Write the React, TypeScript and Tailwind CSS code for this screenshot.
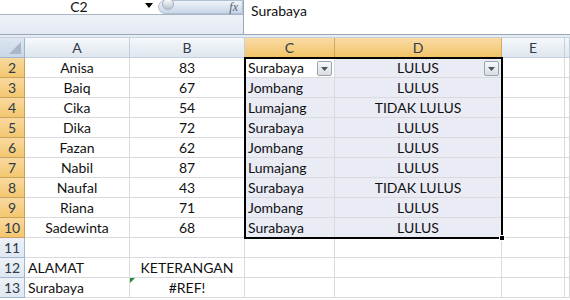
import React from "react";

const rows: { n: number; a: string; b: string; c: string; d: string }[] = [
  { n: 2, a: "Anisa", b: "83", c: "Surabaya", d: "LULUS" },
  { n: 3, a: "Baiq", b: "67", c: "Jombang", d: "LULUS" },
  { n: 4, a: "Cika", b: "54", c: "Lumajang", d: "TIDAK LULUS" },
  { n: 5, a: "Dika", b: "72", c: "Surabaya", d: "LULUS" },
  { n: 6, a: "Fazan", b: "62", c: "Jombang", d: "LULUS" },
  { n: 7, a: "Nabil", b: "87", c: "Lumajang", d: "LULUS" },
  { n: 8, a: "Naufal", b: "43", c: "Surabaya", d: "TIDAK LULUS" },
  { n: 9, a: "Riana", b: "71", c: "Jombang", d: "LULUS" },
  { n: 10, a: "Sadewinta", b: "68", c: "Surabaya", d: "LULUS" },
];

const cell = "h-[20px] border-r border-b border-[#d9dadb] flex items-center";

function DropBtn() {
  return (
    <div className="absolute right-[2px] top-[3px] w-[15px] h-[15px] border border-[#9aa3b0] rounded-[2px] bg-gradient-to-b from-[#f7f8fa] to-[#d9dde3] flex items-center justify-center">
      <svg width="7" height="4" viewBox="0 0 7 4">
        <path d="M0 0 L7 0 L3.5 4 Z" fill="#4a5563" />
      </svg>
    </div>
  );
}

function RowHead({ n, sel }: { n: number; sel: boolean }) {
  return (
    <div
      className={
        "h-[20px] border-r border-b flex items-center justify-center text-[#2f3a4a] " +
        (sel
          ? "bg-gradient-to-b from-[#f9d99f] to-[#f3c76e] border-[#c9a15a]"
          : "bg-gradient-to-b from-[#eef2f8] to-[#dfe7f1] border-[#9eb6ce]")
      }
    >
      {n}
    </div>
  );
}

export default function App() {
  return (
    <div
      className="w-[570px] h-[300px] overflow-hidden bg-white text-[14px] text-[#111] relative"
      style={{ fontFamily: "Lato, 'Open Sans', sans-serif" }}
    >
      {/* Formula bar */}
      <div className="h-[35px] flex border-b border-[#9aa6b4]">
        <div className="w-[244px] flex flex-col border-r border-[#9aa6b4]">
          <div className="h-[15px] flex border-b border-[#a9b5c3] bg-white">
            <div className="w-[158px] relative flex items-center justify-center">
              <span className="leading-none">C2</span>
              <svg className="absolute left-[145px] top-[3px]" width="8" height="5" viewBox="0 0 8 5">
                <path d="M0 0 L8 0 L4 5 Z" fill="#000" />
              </svg>
            </div>
            <div className="flex-1 relative h-[14px] rounded-bl-[10px] rounded-tl-[10px] bg-gradient-to-b from-[#eef3fa] to-[#c9d6e8] border border-[#b2c0d3] flex items-center justify-end pr-[4px]">
              <div className="absolute left-[3px] top-[-3px] w-[12px] h-[12px] rounded-full bg-gradient-to-b from-[#ffffff] to-[#b9c3cf] border border-[#a6b0bd]" />
              <span className="italic text-[12px] text-[#556070] leading-none -mt-[1px]" style={{ fontFamily: "'Liberation Serif', serif" }}>
                fx
              </span>
            </div>
          </div>
          <div className="flex-1 bg-gradient-to-b from-[#eef2f8] to-[#e3e9f2]" />
        </div>
        <div className="flex-1 pl-[7px] bg-white">
          <span className="leading-none">Surabaya</span>
        </div>
      </div>
      <div className="h-[3px] bg-[#e7edf5] border-b border-[#c5d1de]" />

      {/* Grid */}
      <div className="relative">
        <div className="grid grid-cols-[25px_105px_115px_90px_167px_63px_5px]">
          {/* header */}
          <div className="h-[20px] border-r border-b border-[#9eb6ce] bg-gradient-to-b from-[#dde6f2] to-[#c9d6e6] relative">
            <svg className="absolute right-[3px] bottom-[3px]" width="12" height="12" viewBox="0 0 12 12">
              <path d="M12 0 L12 12 L0 12 Z" fill="#a8b6c7" />
            </svg>
          </div>
          {["A", "B", "C", "D", "E", ""].map((h, i) => (
            <div
              key={i}
              className={
                "h-[20px] border-r border-b flex items-center justify-center text-[#2f3a4a] " +
                (h === "C" || h === "D"
                  ? "bg-gradient-to-b from-[#f9dba5] to-[#f2c466] border-[#d1a85e]"
                  : "bg-gradient-to-b from-[#f6f8fb] to-[#dfe6ef] border-[#c3cfdc]")
              }
            >
              {h}
            </div>
          ))}

          {rows.map((r) => (
            <React.Fragment key={r.n}>
              <RowHead n={r.n} sel={true} />
              <div className={cell + " justify-center"}>{r.a}</div>
              <div className={cell + " justify-center"}>{r.b}</div>
              <div className={cell + " pl-[3px] relative " + (r.n === 2 ? "bg-white" : "bg-[#e9ebf5]")}>
                {r.c}
                {r.n === 2 && <DropBtn />}
              </div>
              <div className={cell + " justify-center relative bg-[#e9ebf5]"}>
                {r.d}
                {r.n === 2 && <DropBtn />}
              </div>
              <div className={cell} />
              <div className={cell} />
            </React.Fragment>
          ))}

          <RowHead n={11} sel={false} />
          <div className={cell} />
          <div className={cell} />
          <div className={cell} />
          <div className={cell} />
          <div className={cell} />
          <div className={cell} />

          <RowHead n={12} sel={false} />
          <div className={cell + " pl-[3px]"}>ALAMAT</div>
          <div className={cell + " justify-center"}>KETERANGAN</div>
          <div className={cell} />
          <div className={cell} />
          <div className={cell} />
          <div className={cell} />

          <RowHead n={13} sel={false} />
          <div className={cell + " pl-[3px]"}>Surabaya</div>
          <div className={cell + " justify-center relative"}>
            <svg className="absolute left-0 top-0" width="5" height="5" viewBox="0 0 5 5">
              <path d="M0 0 L5 0 L0 5 Z" fill="#1e8a3a" />
            </svg>
            #REF!
          </div>
          <div className={cell} />
          <div className={cell} />
          <div className={cell} />
          <div className={cell} />
        </div>

        {/* selection border */}
        <div className="absolute left-[244px] top-[19px] w-[259px] h-[182px] border-2 border-black pointer-events-none" />
        <div className="absolute left-[499px] top-[197px] w-[6px] h-[6px] bg-black border border-white" />
      </div>
    </div>
  );
}
